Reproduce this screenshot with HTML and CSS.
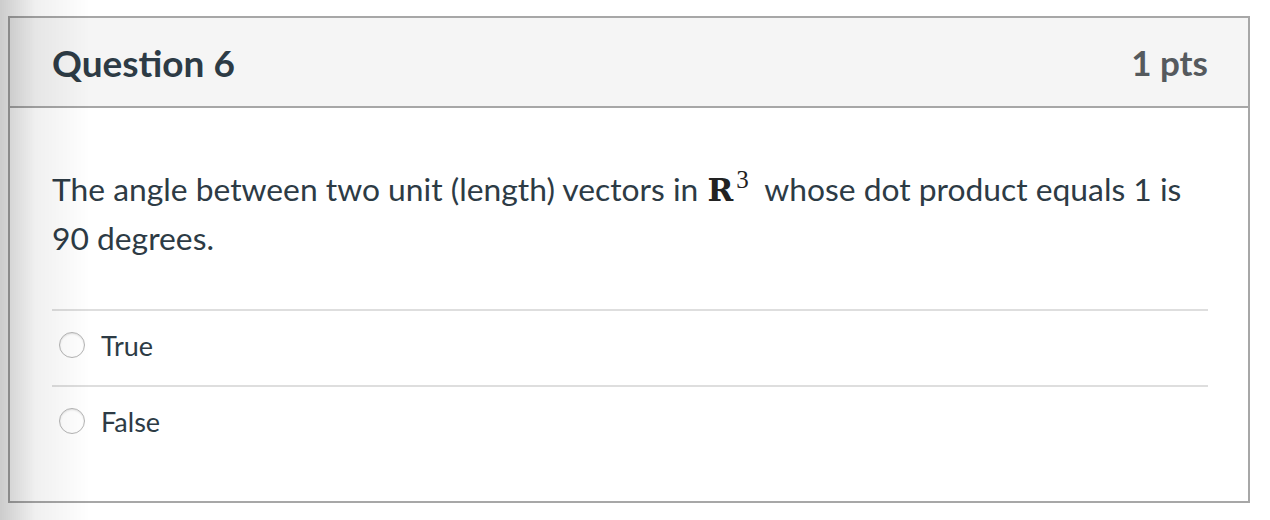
FILE: index.html
```html
<!DOCTYPE html>
<html>
<head>
<meta charset="utf-8">
<link rel="stylesheet" href="styles.css">
</head>
<body>
<div class="shade"></div>
<div class="question">
  <div class="header">
    <h2 class="title">Question 6</h2>
    <span class="pts">1 pts</span>
  </div>
  <div class="content">
    <p class="text">The angle between two unit (length) vectors in <span class="math"><span class="bold-r">R</span><sup class="sup">3</sup></span> whose dot product equals 1 is 90 degrees.</p>
    <div class="answers">
      <label class="answer"><span class="radio"></span><span class="label">True</span></label>
      <label class="answer"><span class="radio"></span><span class="label">False</span></label>
    </div>
  </div>
</div>
</body>
</html>
```

FILE: styles.css
```css
html, body {
  margin: 0;
  padding: 0;
  background: #fff;
}
body {
  padding: 16px 20px 0 8px;
  font-family: Lato, "Open Sans", sans-serif;
  color: #2d3b45;
}
.shade {
  position: fixed;
  top: 0;
  left: 0;
  bottom: 0;
  width: 90px;
  background: linear-gradient(to right, rgba(0,0,0,0.2), rgba(0,0,0,0.06) 40%, rgba(0,0,0,0));
  pointer-events: none;
  z-index: 5;
}
.question {
  border: 2px solid #a7a7a7;
  height: 483px;
  box-sizing: content-box;
}
.header {
  display: flex;
  justify-content: space-between;
  align-items: center;
  background: #f5f5f5;
  border-bottom: 2px solid #a7a7a7;
  height: 88px;
  padding: 0 40px 0 42px;
}
.title {
  margin: 0;
  font-size: 37px;
  font-weight: 700;
  color: #2d3b45;
}
.pts {
  font-size: 35px;
  font-weight: 700;
  color: #555a5e;
}
.content {
  padding: 57px 40px 0 42px;
}
.text {
  margin: 0;
  font-size: 31.8px;
  line-height: 49px;
}
.math {
  font-family: "DejaVu Serif", "Liberation Serif", serif;
  line-height: 1;
  margin: 0 8px 0 1px;
  color: #222;
}
.bold-r {
  font-weight: 700;
  font-size: 31px;
}
.sup {
  display: inline-block;
  font-family: "Liberation Serif", serif;
  font-size: 25px;
  line-height: 1;
  vertical-align: 13px;
  margin-left: 3px;
}
.answers {
  margin-top: 46px;
}
.answer {
  display: flex;
  align-items: center;
  height: 68px;
  padding-bottom: 6px;
  border-top: 2px solid #dedede;
  padding-left: 7px;
}
.radio {
  width: 24px;
  height: 24px;
  border-radius: 50%;
  border: 1px solid #b5b5b5;
  box-shadow: inset 0 1px 2px rgba(0,0,0,0.12);
  background: #fff;
  margin-right: 16px;
}
.label {
  font-size: 27px;
}
```
